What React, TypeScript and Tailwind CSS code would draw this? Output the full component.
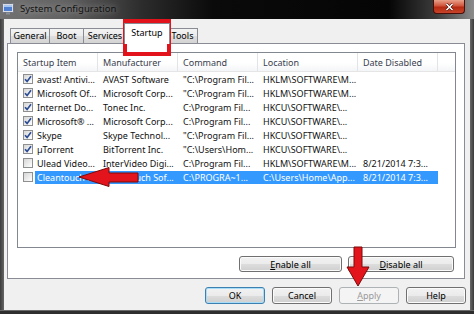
import React from "react";

type Row = {
  on: boolean;
  item: string;
  mfr: string;
  cmd: string;
  loc: string;
  date: string;
  selected?: boolean;
};

const rows: Row[] = [
  { on: true, item: "avast! Antivi...", mfr: "AVAST Software", cmd: "\"C:\\Program Fil...", loc: "HKLM\\SOFTWARE\\M...", date: "" },
  { on: true, item: "Microsoft Of...", mfr: "Microsoft Corp...", cmd: "\"C:\\Program Fil...", loc: "HKLM\\SOFTWARE\\M...", date: "" },
  { on: true, item: "Internet Do...", mfr: "Tonec Inc.", cmd: "C:\\Program Fil...", loc: "HKCU\\SOFTWARE\\...", date: "" },
  { on: true, item: "Microsoft® ...", mfr: "Microsoft Corp...", cmd: "C:\\Program Fil...", loc: "HKCU\\SOFTWARE\\...", date: "" },
  { on: true, item: "Skype", mfr: "Skype Technol...", cmd: "\"C:\\Program Fil...", loc: "HKCU\\SOFTWARE\\...", date: "" },
  { on: true, item: "µTorrent", mfr: "BitTorrent Inc.", cmd: "\"C:\\Users\\Hom...", loc: "HKCU\\SOFTWARE\\...", date: "" },
  { on: false, item: "Ulead Video...", mfr: "InterVideo Digi...", cmd: "C:\\Program Fil...", loc: "HKLM\\SOFTWARE\\M...", date: "8/21/2014 7:3..." },
  { on: false, item: "Cleantouch ...", mfr: "Cleantouch Sof...", cmd: "C:\\PROGRA~1...", loc: "C:\\Users\\Home\\App...", date: "8/21/2014 7:3...", selected: true },
];

const tabs = ["General", "Boot", "Services", "Startup", "Tools"];

function CheckBox({ on }: { on: boolean }) {
  return (
    <span className="flex h-[10px] w-[10px] items-center justify-center border border-[#8e8f8f] bg-[linear-gradient(135deg,#d6d6d6,#ffffff)]">
      {on && (
        <svg width="8" height="8" viewBox="0 0 8 8">
          <path d="M1 4.2 L3.1 6.4 L7 1.3" fill="none" stroke="#2a4b96" strokeWidth="1.6" />
        </svg>
      )}
    </span>
  );
}

function Button({
  label,
  mnemonic,
  kind = "normal",
  className = "",
}: {
  label: string;
  mnemonic?: boolean;
  kind?: "normal" | "default" | "disabled";
  className?: string;
}) {
  const tone =
    kind === "default"
      ? "border-[#3c7fb1] text-black shadow-[inset_0_0_0_1px_#a9dcf6]"
      : kind === "disabled"
        ? "border-[#adb2b5] text-[#9a9a9a] bg-none bg-[#f4f4f4]"
        : "border-[#707070] text-black shadow-[inset_0_0_0_1px_#fbfbfb]";
  return (
    <div
      className={`flex items-center justify-center rounded-[3px] border bg-[linear-gradient(#f2f2f2_0%,#ebebeb_50%,#dddddd_51%,#cfcfcf_100%)] text-[9px] leading-[13px] ${tone} ${className}`}
    >
      {mnemonic ? (
        <span>
          <span className="underline">{label[0]}</span>
          {label.slice(1)}
        </span>
      ) : (
        label
      )}
    </div>
  );
}

function Tab({ label, active }: { label: string; active: boolean }) {
  if (active) {
    return (
      <div className="relative z-10 -mb-px -ml-[3px] flex h-[21px] w-[46px] items-center justify-center border border-b-0 border-[#898c95] bg-white pb-[2px] text-[9px] text-black">
        {label}
      </div>
    );
  }
  const w =
    label === "General"
      ? "w-[40px]"
      : label === "Boot"
        ? "-ml-px w-[35px]"
        : label === "Services"
          ? "-ml-px w-[44px]"
          : "-ml-[3px] w-[31px]";
  return (
    <div
      className={`flex h-[15px] items-center justify-center border border-b-0 border-[#898c95] bg-[linear-gradient(#f3f3f3_0%,#ebebeb_50%,#dedede_51%,#d4d4d4_100%)] text-[9px] text-black ${w}`}
    >
      {label}
    </div>
  );
}

export default function App() {
  return (
    <div className="relative flex h-[314px] w-[474px] flex-col overflow-hidden bg-[#2e2e2e] font-['Noto_Sans',sans-serif]">
      {/* title bar */}
      <div className="flex h-[19px] items-start bg-[linear-gradient(90deg,#727272_0%,#626262_14%,#2c2c2c_30%,#0a0a0a_45%,#050505_82%,#3c3c3c_92%,#8c8c8c_100%)]">
        <svg className="ml-[2px] mt-[3px]" width="12" height="12" viewBox="0 0 12 12">
          <rect x="0.5" y="0.5" width="11" height="9" rx="1" fill="#d9dde3" stroke="#6d7480" />
          <rect x="2" y="2" width="8" height="6" fill="#4f7fd0" />
          <rect x="2" y="2" width="8" height="2" fill="#a9c6f0" />
          <rect x="4" y="9.5" width="4" height="2" fill="#8a8f98" />
        </svg>
        <span className="ml-[6px] mt-[2px] text-[9.5px] leading-[13px] text-[#111] [text-shadow:0_0_6px_rgba(255,255,255,0.55)]">
          System Configuration
        </span>
        <div className="ml-auto mr-[9px] flex h-[14px] w-[32px] items-center justify-center rounded-b-[4px] border border-t-0 border-[#4a0e08] bg-[linear-gradient(#e8a08a_0%,#d0553c_45%,#b52a12_55%,#c8452a_100%)]">
          <svg width="9" height="8" viewBox="0 0 9 8">
            <path d="M1.5 1 L7.5 7 M7.5 1 L1.5 7" stroke="#3a0a04" strokeWidth="2.6" />
            <path d="M1.5 1 L7.5 7 M7.5 1 L1.5 7" stroke="#ffffff" strokeWidth="1.6" />
          </svg>
        </div>
      </div>

      {/* frame + client */}
      <div className="flex h-[291px]">
        <div className="w-[4px] bg-[linear-gradient(90deg,#3c3c3c,#666666)]" />
        <div className="flex w-[466px] flex-col bg-[#f0f0f0] pt-[4px]">
          {/* tabs */}
          <div className="flex h-[20px] items-end pl-[6px]">
            {tabs.map((t) => (
              <Tab key={t} label={t} active={t === "Startup"} />
            ))}
          </div>

          {/* tab page */}
          <div className="ml-[3px] flex h-[236px] w-[458px] flex-col border border-[#898c95] bg-white pl-[9px] pt-[8px]">
            {/* list view */}
            <div className="flex h-[196px] w-[439px] flex-col border border-[#828790] bg-white text-[9px] leading-[13px]">
              <div className="flex h-[19px] border-b border-[#e5e5e5] bg-[linear-gradient(#ffffff_0%,#ffffff_55%,#f4f5f7_100%)] text-[#39414d]">
                <div className="flex w-[80px] items-center border-r border-[#e3e4e8] pl-[5px]">Startup Item</div>
                <div className="flex w-[80px] items-center border-r border-[#e3e4e8] pl-[5px]">Manufacturer</div>
                <div className="flex w-[80px] items-center border-r border-[#e3e4e8] pl-[5px]">Command</div>
                <div className="flex w-[100px] items-center border-r border-[#e3e4e8] pl-[5px]">Location</div>
                <div className="flex w-[80px] items-center border-r border-[#e3e4e8] pl-[5px]">Date Disabled</div>
                <div className="flex-1" />
              </div>
              {rows.map((r) => (
                <div key={r.item} className="flex h-[14px] items-center">
                  <div className="flex w-[17px] items-center pl-[5px]">
                    <CheckBox on={r.on} />
                  </div>
                  <div
                    className={`flex h-[13px] w-[403px] items-center whitespace-nowrap ${
                      r.selected ? "bg-[#3399ff] text-white" : "text-[#111]"
                    }`}
                  >
                    <div className="h-[13px] w-[63px] overflow-hidden pl-[2px]">{r.item}</div>
                    <div className="h-[13px] w-[80px] overflow-hidden pl-[5px]">{r.mfr}</div>
                    <div className="h-[13px] w-[80px] overflow-hidden pl-[5px]">{r.cmd}</div>
                    <div className="h-[13px] w-[100px] overflow-hidden pl-[5px]">{r.loc}</div>
                    <div className="h-[13px] w-[80px] overflow-hidden pl-[5px]">{r.date}</div>
                  </div>
                </div>
              ))}
            </div>

            {/* enable / disable */}
            <div className="mt-[8px] flex h-[16px] justify-end gap-[6px] pr-[10px]">
              <Button label="Enable all" mnemonic className="w-[103px]" />
              <Button label="Disable all" mnemonic className="w-[106px]" />
            </div>
          </div>

          {/* dialog buttons */}
          <div className="mt-[8px] flex h-[17px] justify-end gap-[7px] pr-[4px]">
            <Button label="OK" kind="default" className="w-[60px]" />
            <Button label="Cancel" className="w-[60px]" />
            <Button label="Apply" mnemonic kind="disabled" className="w-[60px]" />
            <Button label="Help" className="w-[60px]" />
          </div>
        </div>
        <div className="w-[4px] bg-[linear-gradient(90deg,#6a6a6a,#3a3a3a)]" />
      </div>
      <div className="h-[4px] border-t border-[#6a6a6a] bg-[#2e2e2e]" />

      {/* annotations */}
      <div className="absolute left-[123px] top-[19px] h-[37px] w-[48px] border-[4px] border-[#e3131b]" />
      <svg className="absolute left-[78px] top-[166px]" width="62" height="22" viewBox="0 0 62 22">
        <polygon points="1,11 31,1.5 31,7 60,7 60,16 31,16 31,20.5" fill="#e3141b" stroke="#7d0a0a" strokeWidth="1" />
      </svg>
      <svg className="absolute left-[346px] top-[246px]" width="24" height="41" viewBox="0 0 24 41">
        <polygon points="8,1 16,1 16,21 23,21 12,40 1,21 8,21" fill="#e3141b" stroke="#7d0a0a" strokeWidth="1" />
      </svg>
    </div>
  );
}
